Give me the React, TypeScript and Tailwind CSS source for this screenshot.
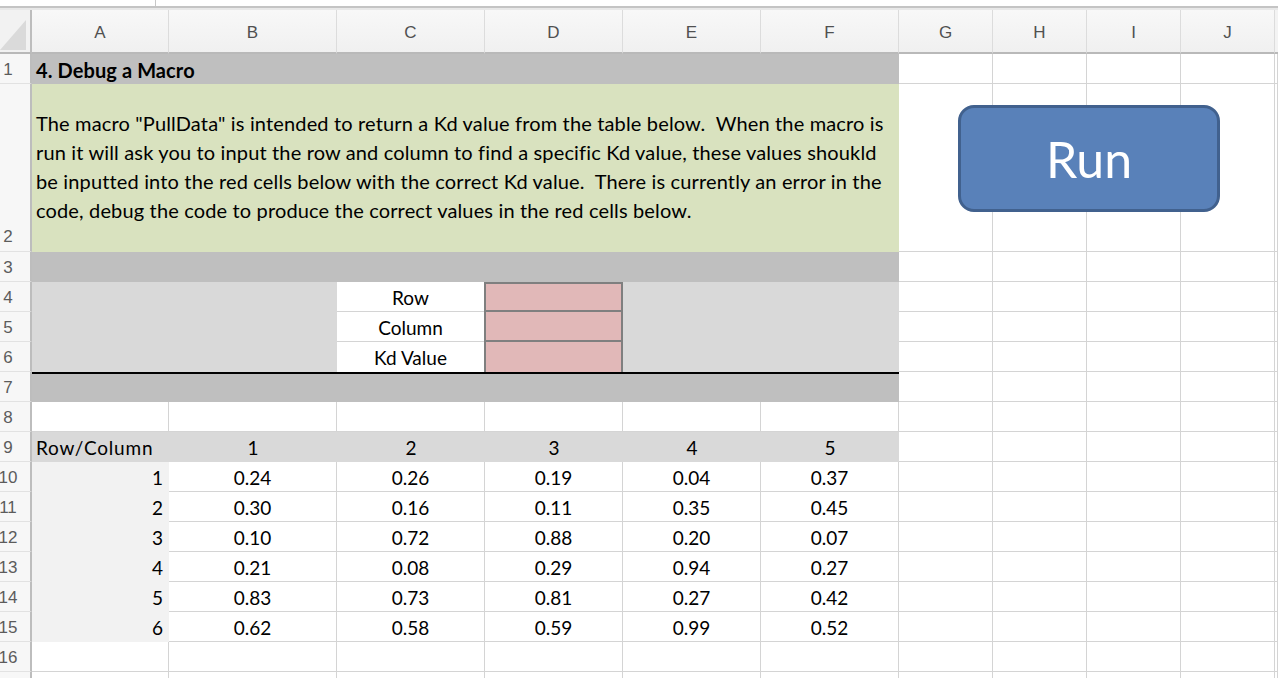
const GRID = 'border-r border-b border-[#d4d4d4] bg-white'
const COLS = ['A', 'B', 'C', 'D', 'E', 'F', 'G', 'H', 'I', 'J']

const TABLE = [
  ['0.24', '0.26', '0.19', '0.04', '0.37'],
  ['0.30', '0.16', '0.11', '0.35', '0.45'],
  ['0.10', '0.72', '0.88', '0.20', '0.07'],
  ['0.21', '0.08', '0.29', '0.94', '0.27'],
  ['0.83', '0.73', '0.81', '0.27', '0.42'],
  ['0.62', '0.58', '0.59', '0.99', '0.52'],
]

function RowHead({ n }: { n?: number }) {
  return (
    <div className="overflow-hidden bg-[#f7f7f7] border-r-2 border-r-[#bdbdbd] border-b border-b-[#e2e2e2] flex items-center pt-[2px]">
      <div className="w-[40px] ml-[-12px] shrink-0 text-center text-[17px] text-[#5c5c5c] font-['Liberation_Sans',sans-serif]">
        {n}
      </div>
    </div>
  )
}

// empty white cells for G..J plus the sliver of K
function RightCells() {
  return (
    <>
      <div className={GRID} />
      <div className={GRID} />
      <div className={GRID} />
      <div className={GRID} />
      <div className={GRID} />
    </>
  )
}

export default function App() {
  return (
    <div className="relative w-[1278px] h-[678px] overflow-hidden bg-white font-[Lato,sans-serif] text-black">
      {/* formula bar remnant */}
      <div className="h-[6px] flex">
        <div className="w-[155px]" />
        <div className="w-px bg-[#c8c8c8]" />
      </div>
      <div className="h-[2px] bg-[#c4c4c4]" />
      <div className="h-[2px] bg-[#e8e8e8]" />

      <div className="grid grid-cols-[32px_137px_168px_148px_138px_138px_138px_94px_94px_94px_94px_1fr] grid-rows-[44px_30px_168px_repeat(15,30px)]">
        {/* column headers */}
        <div className="relative bg-[#f2f2f2] border-r-2 border-r-[#bdbdbd] border-b-2 border-b-[#b9b9b9]">
          <svg className="absolute left-0 top-[10px]" width="27" height="31" viewBox="0 0 27 31">
            <polygon points="26,0 26,30 0,30" fill="#dadada" />
          </svg>
        </div>
        {COLS.map((c) => (
          <div
            key={c}
            className="flex items-center justify-center pt-[3px] bg-gradient-to-b from-[#f8f8f8] to-[#f0f0f0] border-r border-r-[#dcdcdc] border-b-2 border-b-[#b9b9b9] text-[17px] text-[#505050] font-['Liberation_Sans',sans-serif]"
          >
            {c}
          </div>
        ))}
        <div className="bg-[#f3f3f3] border-b-2 border-b-[#b9b9b9]" />

        {/* row 1 */}
        <RowHead n={1} />
        <div className="col-span-6 bg-[#bfbfbf] flex items-center pl-[4px] pt-[2px] text-[20px] font-bold tracking-[0.1px]">
          4. Debug a Macro
        </div>
        <RightCells />

        {/* row 2 */}
        <div className="overflow-hidden bg-[#f7f7f7] border-r-2 border-r-[#bdbdbd] border-b border-b-[#e2e2e2] flex items-end pb-[2px]">
          <div className="w-[40px] ml-[-12px] shrink-0 text-center text-[17px] text-[#5c5c5c] font-['Liberation_Sans',sans-serif]">
            2
          </div>
        </div>
        <div className="col-span-6 bg-[#d9e2bf] flex flex-col justify-center pl-[4px] pb-[3px] text-[20px] leading-[29px] tracking-[0.15px] whitespace-pre">
          <div>The macro "PullData" is intended to return a Kd value from the table below.  When the macro is</div>
          <div>run it will ask you to input the row and column to find a specific Kd value, these values shoukld</div>
          <div>be inputted into the red cells below with the correct Kd value.  There is currently an error in the</div>
          <div>code, debug the code to produce the correct values in the red cells below.</div>
        </div>
        <RightCells />

        {/* row 3 */}
        <RowHead n={3} />
        <div className="col-span-6 bg-[#bfbfbf]" />
        <RightCells />

        {/* rows 4-6 */}
        <RowHead n={4} />
        <div className="col-span-2 row-span-3 bg-[#d9d9d9]" />
        <div className={`${GRID} flex items-center justify-center pt-[3px] text-[19px]`}>Row</div>
        <div className="bg-[#e1b8b8] border-2 border-[#7f7f7f] -ml-[1px]" />
        <div className="col-span-2 row-span-3 bg-[#d9d9d9]" />
        <RightCells />

        <RowHead n={5} />
        <div className={`${GRID} flex items-center justify-center pt-[3px] text-[19px]`}>Column</div>
        <div className="bg-[#e1b8b8] border-x-2 border-b-2 border-[#7f7f7f] -ml-[1px]" />
        <RightCells />

        <RowHead n={6} />
        <div className="bg-white border-r border-r-[#d4d4d4] flex items-center justify-center pt-[3px] text-[19px]">Kd Value</div>
        <div className="bg-[#e1b8b8] border-x-2 border-[#7f7f7f] -ml-[1px]" />
        <RightCells />

        {/* row 7 */}
        <RowHead n={7} />
        <div className="col-span-6 bg-[#bfbfbf] border-t-2 border-black" />
        <RightCells />

        {/* row 8 */}
        <RowHead n={8} />
        {COLS.slice(0, 6).map((c) => (
          <div key={c} className={GRID} />
        ))}
        <RightCells />

        {/* row 9: table header */}
        <RowHead n={9} />
        <div className="bg-[#d9d9d9] flex items-center pl-[4px] pt-[3px] text-[19px] tracking-[0.8px]">Row/Column</div>
        {[1, 2, 3, 4, 5].map((n) => (
          <div key={n} className="bg-[#d9d9d9] flex items-center justify-center pt-[3px] text-[19px]">
            {n}
          </div>
        ))}
        <RightCells />

        {/* rows 10-15 */}
        {TABLE.map((vals, i) => (
          <div key={i} className="contents">
            <RowHead n={10 + i} />
            <div className="bg-[#f2f2f2] flex items-center justify-end pr-[6px] pt-[3px] text-[19px]">{i + 1}</div>
            {vals.map((v, j) => (
              <div key={j} className={`${GRID} flex items-center justify-center pt-[3px] text-[19px]`}>
                {v}
              </div>
            ))}
            <RightCells />
          </div>
        ))}

        {/* rows 16-17 */}
        {[16, 17].map((n) => (
          <div key={n} className="contents">
            <RowHead n={n === 16 ? n : undefined} />
            {COLS.slice(0, 6).map((c) => (
              <div key={c} className={GRID} />
            ))}
            <RightCells />
          </div>
        ))}
      </div>

      {/* macro button shape floating over the sheet */}
      <div className="absolute left-[958px] top-[105px] w-[262px] h-[107px] rounded-[16px] border-[3px] border-[#41618e] bg-[#5981b9] flex items-center justify-center text-white text-[50px] leading-none">
        Run
      </div>
    </div>
  )
}
